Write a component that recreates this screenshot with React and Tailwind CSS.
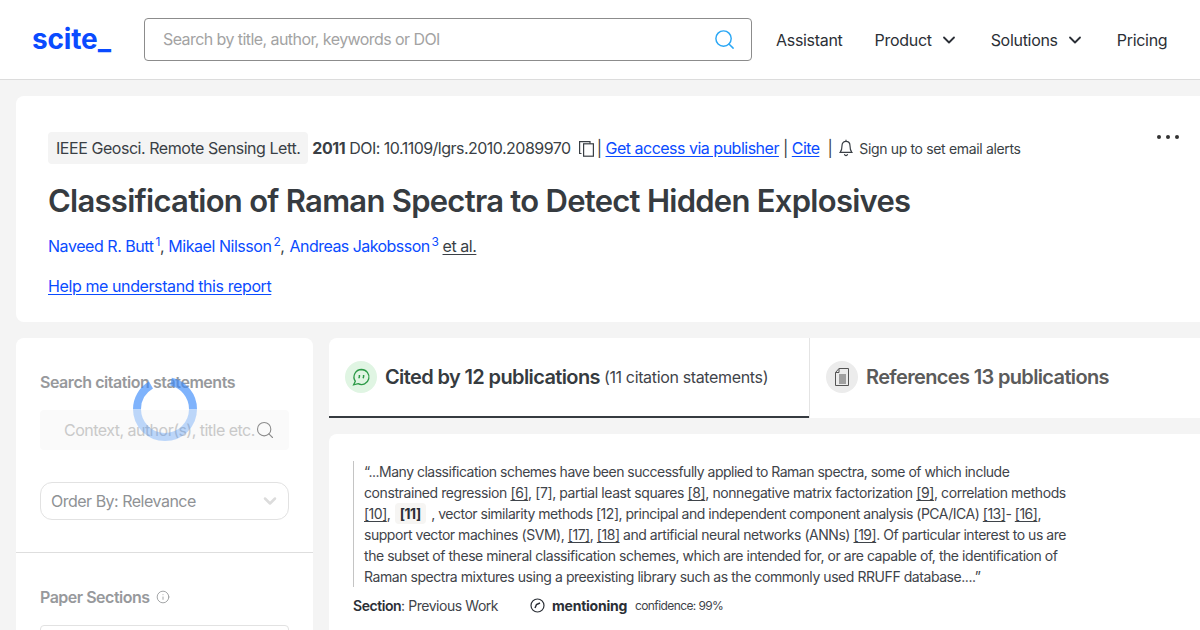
import React from 'react';
import { Search, ChevronDown, Info } from 'lucide-react';

const Ref = ({ children }) => <span className="underline underline-offset-2">{children}</span>;

function Header() {
    return (
        <header className="h-20 shrink-0 bg-white border-b border-[#dcdcdc] flex items-center pl-[32px] pr-[32px]">
            <div className="w-[112px] text-[#0a4bff] text-[28px] font-bold leading-none tracking-[-0.15px] -mt-[1px]">scite_</div>
            <div className="w-[608px] h-[43px] -mt-[1px] border border-[#8c8c8c] rounded-[4px] flex items-center justify-between pl-[18px] pr-[15px]">
                <span className="text-[16px] text-[#a3a3a3] tracking-[-0.57px]">Search by title, author, keywords or DOI</span>
                <Search size={23} strokeWidth={1.5} className="text-[#2aa7f5]" />
            </div>
            <nav className="flex items-center gap-[32px] text-[16px] text-[#2b2f36] tracking-[-0.3px] ml-[24px] flex-1">
                <span>Assistant</span>
                <span className="flex items-center gap-[7px]">Product <ChevronDown size={20} strokeWidth={2.2} /></span>
                <span className="flex items-center gap-[7px]">Solutions <ChevronDown size={20} strokeWidth={2.2} /></span>
                <span>Pricing</span>
            </nav>
        </header>
    );
}

function PaperCard() {
    return (
        <section className="relative shrink-0 h-[226px] ml-[16px] mt-[16px] bg-white rounded-l-[8px] pl-[32px] pt-[36px] text-[#3a3f45]">
            <div className="flex items-center text-[16px] tracking-[-0.45px] h-[32px] whitespace-nowrap">
                <span className="bg-[#f4f4f4] rounded-[4px] h-[32px] px-[8px] flex items-center">IEEE Geosci. Remote Sensing Lett.</span>
                <span className="font-bold ml-[4px]">2011</span>
                <span className="ml-[4px] tracking-[-0.52px]">DOI: 10.1109/lgrs.2010.2089970</span>
                <svg className="ml-[7px]" width="18" height="17" viewBox="0 0 18 17" fill="none" stroke="#3a3f45" strokeWidth="1.2">
                    <path d="M3.500 13.500H1.600V1.600H12V3.800" />
                    <rect x="5.600" y="3.800" width="9.800" height="12.400" />
                </svg>
                <span className="ml-[1px] mr-[4px]">|</span>
                <span className="text-[#0a4bff] underline underline-offset-2 tracking-[-0.5px]">Get access via publisher</span>
                <span className="mx-[4px]">|</span>
                <span className="text-[#0a4bff] underline underline-offset-2 tracking-[-0.6px]">Cite</span>
                <span className="ml-[8px]">|</span>
                <svg className="ml-[6px]" width="16" height="18" viewBox="0 0 16 18" fill="none" stroke="#3a3f45" strokeWidth="1.2">
                    <path d="M8 .8v1.600M8 2.400c-2.600 0-4 1.900-4 4.400 0 3.200-.5 5-1.800 6.600h11.600C12.500 11.800 12 10 12 6.800c0-2.500-1.400-4.400-4-4.400z" />
                    <path d="M6.400 15.200c.3 1 .9 1.500 1.600 1.500s1.300-.5 1.600-1.500" />
                </svg>
                <span className="ml-[5px] text-[14px] tracking-[-0.34px]">Sign up to set email alerts</span>
            </div>
            <h1 className="text-[31px] font-semibold leading-[40px] mt-[17px] tracking-[-0.73px] text-[#363b40]">Classification of Raman Spectra to Detect Hidden Explosives</h1>
            <div className="text-[16px] tracking-[-0.45px] mt-[13px] leading-[24px]">
                <span className="text-[#0a4bff]">Naveed R. Butt<sup className="ml-[2px] text-[12px]">1</sup></span>,{' '}
                <span className="text-[#0a4bff]">Mikael Nilsson<sup className="ml-[2px] text-[12px]">2</sup></span>,{' '}
                <span className="text-[#0a4bff] tracking-[-0.55px] ml-[1px]">Andreas Jakobsson<sup className="ml-[2px] text-[12px]">3</sup></span>{' '}
                <span className="underline underline-offset-2">et al.</span>
            </div>
            <div className="text-[16px] tracking-[-0.4px] text-[#0a4bff] underline underline-offset-2 mt-[16px] leading-[24px]">Help me understand this report</div>
            <div className="absolute right-[21px] top-[39px] flex gap-[5px]">
                <i className="w-[4px] h-[4px] rounded-full bg-[#333]" />
                <i className="w-[4px] h-[4px] rounded-full bg-[#333]" />
                <i className="w-[4px] h-[4px] rounded-full bg-[#333]" />
            </div>
        </section>
    );
}

function Sidebar() {
    return (
        <aside className="relative w-[297px] shrink-0 h-[320px] bg-white rounded-t-[8px] text-[#8f9295]">
            <div className="px-[24px] pt-[34px] pb-[32px] border-b border-[#dedede]">
                <div className="text-[16px] font-semibold tracking-[-0.45px] leading-[20px] text-[#97999c]">Search citation statements</div>
                <div className="mt-[18px] h-[40px] bg-[#fafafa] rounded-[4px] flex items-center justify-between pl-[24px] pr-[15px] text-[16px] text-[#c9c9c9] tracking-[-0.52px]">
                    <span className="whitespace-nowrap">Context, author(s), title etc.</span>
                    <Search size={20} strokeWidth={1.3} className="text-[#8c8c8c] shrink-0" />
                </div>
                <div className="mt-[32px] h-[38px] border border-[#e2e2e2] rounded-[12px] flex items-center justify-between pl-[10px] pr-[8px] text-[16px] tracking-[-0.5px] text-[#8f9295]">
                    <span>Order By: Relevance</span>
                    <ChevronDown size={20} strokeWidth={3} className="text-[#dcdcdc]" />
                </div>
            </div>
            <div className="px-[24px] pt-[34px]">
                <div className="flex items-center gap-[6px] text-[16px] font-semibold tracking-[-0.5px] leading-[20px] text-[#97999c]">
                    Paper Sections <Info size={14} strokeWidth={1.5} />
                </div>
                <div className="mt-[18px] h-[40px] border border-[#e2e2e2] rounded-[4px]" />
            </div>
            {/* loading spinner over the panel, see-through so the text stays visible */}
            <svg className="absolute left-[117px] top-[39px]" width="64" height="64" viewBox="0 0 64 64" fill="none">
                <path d="M4 32a28 28 0 0 0 56 0" stroke="#3b8bfa" strokeOpacity="0.32" strokeWidth="8" />
                <path d="M4 32A28 28 0 0 1 18 8M38 4.700A28 28 0 0 1 60 32" stroke="#3b8bfa" strokeOpacity="0.65" strokeWidth="8" />
            </svg>
        </aside>
    );
}

function Tabs() {
    return (
        <div className="h-[80px] bg-white rounded-tl-[8px] flex">
            <div className="w-[480px] shrink-0 border-b-2 border-[#363b40] flex items-center pl-[16px] gap-[8px]">
                <span className="w-[32px] h-[32px] rounded-full bg-[#e0f5e3] flex items-center justify-center">
                    <svg width="20" height="20" viewBox="0 0 20 20" fill="none" stroke="#2c9a47" strokeWidth="1.3">
                        <path d="M10.500 2.500a7.500 7.500 0 1 1-3.400 14.200L2.600 17.800l1.700-3.600A7.500 7.500 0 0 1 10.500 2.500z" />
                        <path d="M8.400 8v1.500c0 .8-.3 1.300-.8 1.600M12.600 8v1.500c0 .8-.3 1.300-.8 1.600" strokeWidth="1.500" />
                    </svg>
                </span>
                <span className="text-[20px] font-semibold tracking-[-0.62px] text-[#363b40]">Cited by 12 publications</span>
                <span className="text-[16px] tracking-[-0.35px] text-[#3f444a] -ml-[4px]">(11 citation statements)</span>
            </div>
            <div className="flex-1 border-l border-[#e4e4e4] flex items-center pl-[16px] pb-[2px] gap-[8px]">
                <span className="w-[32px] h-[32px] rounded-full bg-[#ececec] flex items-center justify-center">
                    <svg width="18" height="20" viewBox="0 0 18 20" fill="none" stroke="#555" strokeWidth="1">
                        <path d="M6 1.500h9.500v17h-13V5.500z" />
                        <path d="M6 1.500v4H2.500M6 8h7M6 10h7M6 12h7M6 14h7M6 16h7" />
                    </svg>
                </span>
                <span className="text-[20px] font-semibold tracking-[-0.65px] text-[#5b5b5b]">References 13 publications</span>
            </div>
        </div>
    );
}

function Quote() {
    return (
        <div className="mt-[16px] bg-white rounded-tl-[8px] h-[200px] pl-[24px] pt-[27px] text-[#3f444a]">
            <div className="border-l border-[#c4c4c4] pl-[10px] text-[14px] leading-[21px] whitespace-nowrap h-[126px]">
                <div className="tracking-[-0.5px]">“...Many classification schemes have been successfully applied to Raman spectra, some of which include</div>
                <div className="tracking-[-0.41px]">constrained regression <Ref>[6]</Ref>, [7], partial least squares <Ref>[8]</Ref>, nonnegative matrix factorization <Ref>[9]</Ref>, correlation methods</div>
                <div className="tracking-[-0.49px]"><Ref>[10]</Ref>, <span className="inline-block bg-[#f6f5f3] rounded-[4px] px-[5px] ml-[1px] mr-[2px] leading-[21px] font-bold text-[#2b2f36]">[11]</span> , vector similarity methods [12], principal and independent component analysis (PCA/ICA) <Ref>[13]</Ref>- <Ref>[16]</Ref>,</div>
                <div className="tracking-[-0.46px]">support vector machines (SVM), <Ref>[17]</Ref>, <Ref>[18]</Ref> and artificial neural networks (ANNs) <Ref>[19]</Ref>. Of particular interest to us are</div>
                <div className="tracking-[-0.45px]">the subset of these mineral classification schemes, which are intended for, or are capable of, the identification of</div>
                <div className="tracking-[-0.44px]">Raman spectra mixtures using a preexisting library such as the commonly used RRUFF database....”</div>
            </div>
            <div className="flex items-center h-[21px] mt-[8px] text-[14px] tracking-[-0.45px] whitespace-nowrap">
                <span><b className="font-semibold text-[#2b2f36]">Section</b>: Previous Work</span>
                <svg className="ml-[32px]" width="15" height="15" viewBox="0 0 15 15" fill="none" stroke="#2b2f36" strokeWidth="1.200">
                    <circle cx="7.500" cy="7.500" r="6.500" />
                    <path d="M5 10l1.500-3.500L10 5" strokeWidth="1.500" />
                </svg>
                <b className="ml-[7px] font-bold tracking-[-0.25px] text-[#2b2f36]">mentioning</b>
                <span className="ml-[8px] text-[12px] tracking-[-0.6px]">confidence: 99%</span>
            </div>
        </div>
    );
}

export default function App() {
    return (
        <div className="w-[1200px] h-[630px] overflow-hidden bg-[#f4f4f4] flex flex-col font-['Inter',sans-serif]">
            <Header />
            <PaperCard />
            <div className="flex items-start ml-[16px] mt-[16px] gap-[16px]">
                <Sidebar />
                <main className="flex-1 min-w-0">
                    <Tabs />
                    <Quote />
                </main>
            </div>
        </div>
    );
}
